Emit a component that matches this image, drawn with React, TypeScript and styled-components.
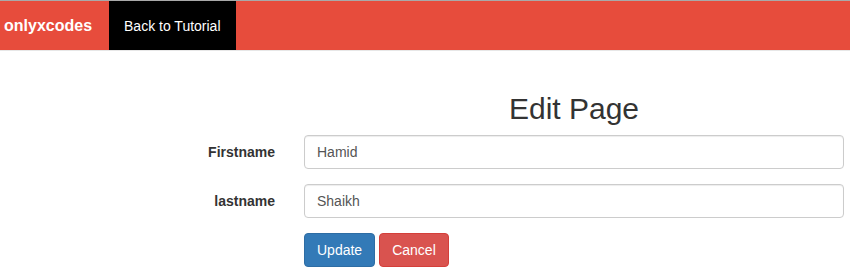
import React from 'react';
import styled, { createGlobalStyle } from 'styled-components';

const GlobalStyle = createGlobalStyle`
  body {
    margin: 0;
    font-family: "Liberation Sans", Arial, sans-serif;
    font-size: 14px;
    color: #333;
    background: #fff;
  }
`;

const Navbar = styled.nav`
  display: flex;
  align-items: stretch;
  height: 49px;
  background: #e74c3c;
  border-top: 1px solid #a9a9a9;
  border-bottom: 1px solid #e7e7e7;
`;

const Brand = styled.a`
  display: flex;
  align-items: center;
  padding: 0 17px 0 4px;
  color: #fff;
  font-size: 16px;
  font-weight: bold;
  text-decoration: none;
`;

const NavLink = styled.a`
  display: flex;
  align-items: center;
  padding: 0 15px;
  background: #000;
  color: #fff;
  font-size: 14px;
  text-decoration: none;
`;

const Header = styled.div`
  display: flex;
  margin: 41px 6px 10px 0;
`;

const Spacer = styled.div`
  width: 304px;
  flex-shrink: 0;
`;

const Title = styled.h2`
  flex: 1;
  margin: 0;
  text-align: center;
  font-size: 30px;
  font-weight: 500;
  line-height: 1.1;
  color: #333;
`;

const Form = styled.form`
  display: flex;
  flex-direction: column;
  gap: 15px;
  padding: 0 6px 0 0;
`;

const Row = styled.div`
  display: flex;
  align-items: center;
  gap: 29px;
`;

const Label = styled.label`
  width: 275px;
  flex-shrink: 0;
  text-align: right;
  font-weight: bold;
`;

const Field = styled.div`
  flex: 1;
  display: flex;
  gap: 4px;
`;

const Input = styled.input`
  width: 100%;
  height: 34px;
  box-sizing: border-box;
  padding: 6px 12px;
  border: 1px solid #ccc;
  border-radius: 4px;
  font-family: inherit;
  font-size: 14px;
  color: #555;
  box-shadow: inset 0 1px 1px rgba(0, 0, 0, 0.075);
`;

const Button = styled.button<{ $variant: 'primary' | 'danger' }>`
  height: 34px;
  padding: 6px 12px;
  border-radius: 4px;
  font-family: inherit;
  font-size: 14px;
  color: #fff;
  background: ${p => (p.$variant === 'primary' ? '#337ab7' : '#d9534f')};
  border: 1px solid ${p => (p.$variant === 'primary' ? '#2e6da4' : '#d43f3a')};
  cursor: pointer;
`;

const App = () => {
  return (
    <>
      <GlobalStyle />
      <Navbar>
        <Brand href="#">onlyxcodes</Brand>
        <NavLink href="#">Back to Tutorial</NavLink>
      </Navbar>
      <Header>
        <Spacer />
        <Title>Edit Page</Title>
      </Header>
      <Form onSubmit={e => e.preventDefault()}>
        <Row>
          <Label>Firstname</Label>
          <Field>
            <Input type="text" defaultValue="Hamid" />
          </Field>
        </Row>
        <Row>
          <Label>lastname</Label>
          <Field>
            <Input type="text" defaultValue="Shaikh" />
          </Field>
        </Row>
        <Row>
          <Label as="div" />
          <Field>
            <Button $variant="primary" type="submit">Update</Button>
            <Button $variant="danger" type="button">Cancel</Button>
          </Field>
        </Row>
      </Form>
    </>
  );
};

export default App;
